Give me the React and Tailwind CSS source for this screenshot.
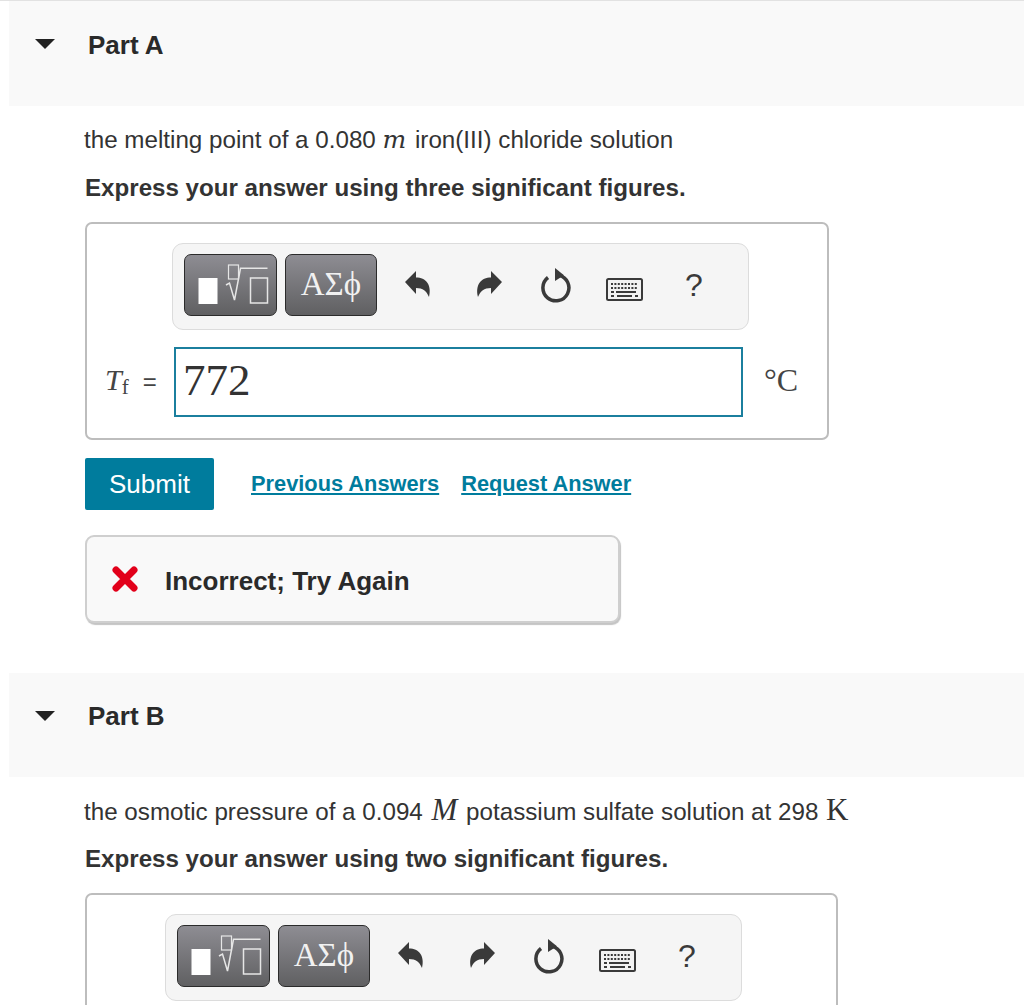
const sans = { fontFamily: '"Liberation Sans", Arial, sans-serif' };

function Triangle() {
  return (
    <svg width="20" height="10" viewBox="0 0 20 10" className="block">
      <path d="M0 0H20L10 10Z" fill="#222" />
    </svg>
  );
}

function PartHeader({ label, h, labelTop }) {
  return (
    <div className={`ml-[9px] flex bg-[#f9f9f9] pl-[26px] ${h}`}>
      <div className="mt-[38px]"><Triangle /></div>
      <div className={`ml-[33px] text-[26px] font-bold leading-[36px] text-[#2a2a2a] ${labelTop}`}>{label}</div>
    </div>
  );
}

function MathButtons() {
  return (
    <div className="flex gap-[8px]">
      <div className="flex h-[62px] w-[93px] items-center justify-center rounded-[7px] border border-[#2b2b2b] bg-gradient-to-b from-[#8e8d93] to-[#606062]">
        <svg width="80" height="50" viewBox="0 0 80 50">
          <rect x="7.500" y="18" width="19" height="26" fill="#fff" />
          <rect x="37.500" y="5" width="10" height="14" fill="none" stroke="#e6e6e6" strokeWidth="1.200" />
          <path d="M35 25l3.500-2 5 17 6-31.700h27" fill="none" stroke="#e6e6e6" strokeWidth="1.500" />
          <rect x="59.500" y="18" width="17" height="25" fill="none" stroke="#e6e6e6" strokeWidth="1.500" />
        </svg>
      </div>
      <div className="flex h-[62px] w-[92px] items-center justify-center rounded-[7px] border border-[#2b2b2b] bg-gradient-to-b from-[#8e8d93] to-[#606062] font-['Liberation_Serif',serif] text-[33px] text-[#f1f1f1]">
        ΑΣϕ
      </div>
    </div>
  );
}

function Tools() {
  return (
    <>
      <svg width="28" height="30" viewBox="0 0 28 30" className="ml-[27px]">
        <path d="M1 12L12 1V7.500C22 7.500 28 15 25 27C22.500 21 19 18 12 18V24Z" fill="#3a3a3a" />
      </svg>
      <svg width="28" height="30" viewBox="0 0 28 30" className="ml-[43px]">
        <path d="M27 12L16 1V7.500C6 7.500 0 15 3 27C5.500 21 9 18 16 18V24Z" fill="#3a3a3a" />
      </svg>
      <svg width="34" height="36" viewBox="0 0 34 36" className="ml-[36px]">
        <path d="M20 8.200A13 13 0 1 1 9 10.500" fill="none" stroke="#3a3a3a" strokeWidth="3.500" />
        <path d="M16 1L25 8.200L16 14Z" fill="#3a3a3a" />
      </svg>
      <svg width="37" height="23" viewBox="0 0 37 23" className="ml-[33px] mt-[9px]">
        <rect x="1" y="1" width="35" height="21" rx="1.500" fill="#f2f2f2" stroke="#3a3a3a" strokeWidth="2" />
        <path d="M5 6h27M5 10h27" stroke="#3a3a3a" strokeWidth="2.200" strokeDasharray="2 1.400" />
        <path d="M5 14h3M10 14h20M5 18h3M11 18h15M29 18h3" stroke="#3a3a3a" strokeWidth="2.200" />
      </svg>
      <div className="ml-[42px] font-['Liberation_Sans',sans-serif] text-[32px] leading-[36px] text-[#3a3a3a]">?</div>
    </>
  );
}

function Toolbar({ ml }) {
  return (
    <div className={`flex h-[87px] w-[577px] items-start rounded-[11px] border border-[#dcdcdc] bg-[#f5f5f5] pl-[11px] pt-[10px] ${ml}`}>
      <MathButtons />
      <div className="flex h-[62px] items-center"><Tools /></div>
    </div>
  );
}

function Serif({ children, className = "" }) {
  return <span className={`font-['Liberation_Serif',serif] ${className}`}>{children}</span>;
}

export default function App() {
  return (
    <div className="h-[1005px] w-[1024px] overflow-hidden bg-white text-[#333]" style={sans}>
      <div className="h-px bg-[#e2e2e2]" />
      <PartHeader label="Part A" h="h-[105px]" labelTop="mt-[26px]" />

      <div className="ml-[84px] mt-[18px] h-[32px] text-[24.200px] leading-[32px] text-[#333]">
        the melting point of a 0.080 <span className="mr-[2px] font-['DejaVu_Serif',serif] text-[25px] italic">m</span> iron(III) chloride solution
      </div>
      <div className="ml-[85px] mt-[16px] text-[24.140px] font-bold leading-[32px] text-[#333]">
        Express your answer using three significant figures.
      </div>

      <div className="ml-[85px] mt-[18px] h-[218px] w-[744px] rounded-[7px] border-2 border-[#bdbdbd] bg-white pt-[19px]">
        <Toolbar ml="ml-[85px]" />
        <div className="mt-[17px] flex items-center">
          <div className="mb-[5px] ml-[18px] flex w-[69px] items-baseline">
            <Serif className="text-[30px] italic text-[#444]">T</Serif>
            <Serif className="translate-y-[4px] text-[21px] text-[#444]">f</Serif>
            <span className="ml-[14px] text-[24px] text-[#444]">=</span>
          </div>
          <div className="flex h-[70px] w-[569px] items-center border-2 border-[#1b7f9e] bg-white pb-[2px] pl-[7px] font-['Liberation_Serif',serif] text-[45px] text-[#333]">
            772
          </div>
          <Serif className="mb-[5px] ml-[21px] text-[32px] text-[#444]">°C</Serif>
        </div>
      </div>

      <div className="ml-[85px] mt-[18px] flex items-center">
        <div className="flex h-[52px] w-[129px] items-center justify-center rounded-[2px] bg-[#007c9d] text-[26px] text-white">Submit</div>
        <span className="ml-[37px] text-[21.800px] font-bold text-[#007c9d] underline">Previous Answers</span>
        <span className="ml-[22px] text-[21.800px] font-bold text-[#007c9d] underline">Request Answer</span>
      </div>

      <div className="ml-[85px] mt-[25px] flex h-[88px] w-[535px] items-center rounded-[9px] border-2 border-[#cfcfcf] bg-[#f9f9f9] pl-[25px] shadow-[1px_2px_1px_#c4c4c4]">
        <svg width="26" height="26" viewBox="0 0 26 26">
          <path d="M4 4L22 22M22 4L4 22" stroke="#e2001a" strokeWidth="7" strokeLinecap="round" />
        </svg>
        <span className="ml-[27px] mt-[5px] text-[26px] font-bold text-[#2a2a2a]">Incorrect; Try Again</span>
      </div>

      <div className="mt-[50px]"><PartHeader label="Part B" h="h-[104px]" labelTop="mt-[25px]" /></div>

      <div className="ml-[84px] mt-[17px] h-[32px] text-[24.200px] leading-[32px] text-[#333]">
        the osmotic pressure of a 0.094 <Serif className="mx-[2px] text-[31px] italic">M</Serif> potassium sulfate solution at 298 <Serif className="ml-[1px] text-[31px]">K</Serif>
      </div>
      <div className="ml-[85px] mt-[17px] text-[24.140px] font-bold leading-[32px] text-[#333]">
        Express your answer using two significant figures.
      </div>

      <div className="ml-[85px] mt-[18px] h-[218px] w-[753px] rounded-[7px] border-2 border-[#bdbdbd] bg-white pt-[19px]">
        <Toolbar ml="ml-[78px]" />
      </div>
    </div>
  );
}
